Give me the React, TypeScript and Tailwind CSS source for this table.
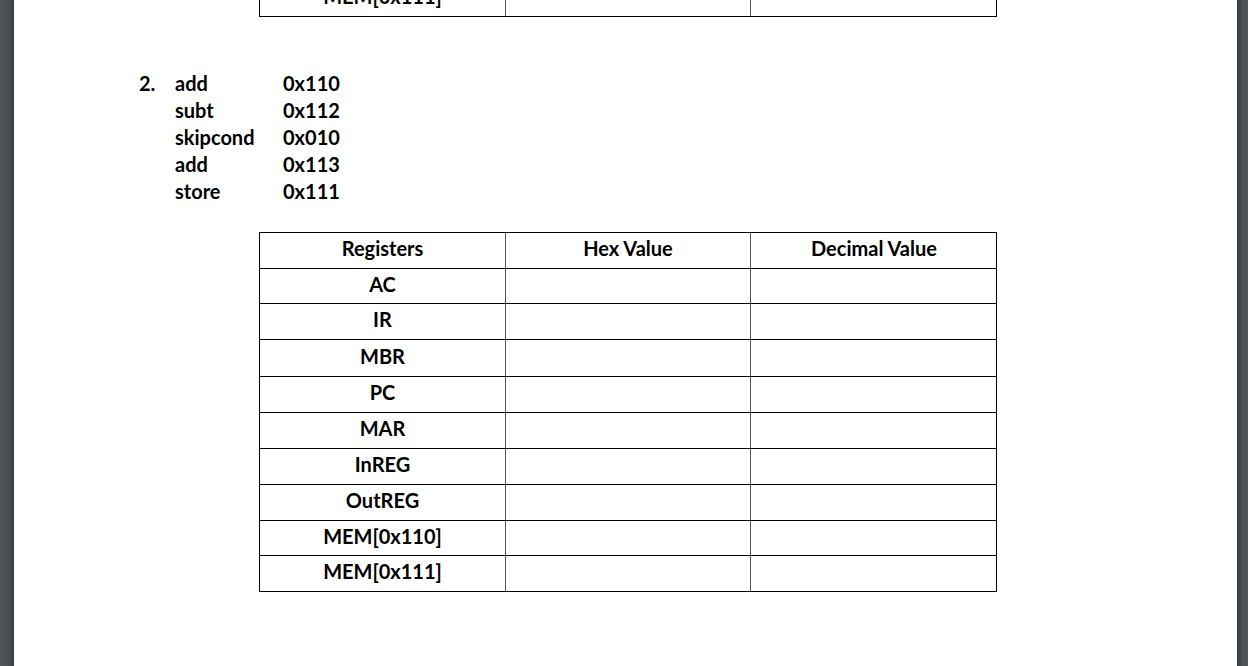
const rows: [string, number][] = [
  ["AC", 35],
  ["IR", 36],
  ["MBR", 37],
  ["PC", 36],
  ["MAR", 36],
  ["InREG", 36],
  ["OutREG", 36],
  ["MEM[0x110]", 35],
  ["MEM[0x111]", 35],
];

const program = [
  ["add", "0x110"],
  ["subt", "0x112"],
  ["skipcond", "0x010"],
  ["add", "0x113"],
  ["store", "0x111"],
];

function Row({ label, h, header = false, last = false }: { label: string; h: number; header?: boolean; last?: boolean }) {
  return (
    <div
      className={`grid grid-cols-[246px_245px_246px] ${last ? "" : "border-b border-black"}`}
      style={{ height: h }}
    >
      <div className="flex items-center justify-center pb-[5px] border-r border-[#555]">{label}</div>
      <div className="flex items-center justify-center pb-[5px] border-r border-[#555]">{header ? "Hex Value" : ""}</div>
      <div className="flex items-center justify-center pb-[5px]">{header ? "Decimal Value" : ""}</div>
    </div>
  );
}

export default function App() {
  return (
    <div className="flex h-[666px] w-[1248px] overflow-hidden bg-[#525659]" style={{ fontFamily: "Lato, 'Open Sans', sans-serif" }}>
      <div className="w-[14px] bg-gradient-to-r from-[#525659] via-[#4d5154] to-[#3a3d40]" />
      <div className="flex-1 bg-white text-black font-bold text-[20px]">
        {/* tail of the previous table */}
        <div className="ml-[245px] -mt-[20px] w-[738px] border border-black border-t-0">
          <Row label="MEM[0x111]" h={36} last />
        </div>

        {/* question 2 */}
        <div className="ml-[125px] mt-[53px] flex leading-[27px]">
          <div className="w-[36px]">2.</div>
          <div className="flex flex-col">
            {program.map(([op, addr], i) => (
              <div key={i} className="flex">
                <span className="w-[108px]">{op}</span>
                <span>{addr}</span>
              </div>
            ))}
          </div>
        </div>

        <div className="ml-[245px] mt-[27px] w-[738px] border border-black">
          <Row label="Registers" h={36} header />
          {rows.map(([r, h], i) => (
            <Row key={r} label={r} h={h} last={i === rows.length - 1} />
          ))}
        </div>
      </div>
      <div className="w-[11px] bg-gradient-to-r from-[#3a3d40] via-[#4d5154] to-[#525659]" />
    </div>
  );
}
